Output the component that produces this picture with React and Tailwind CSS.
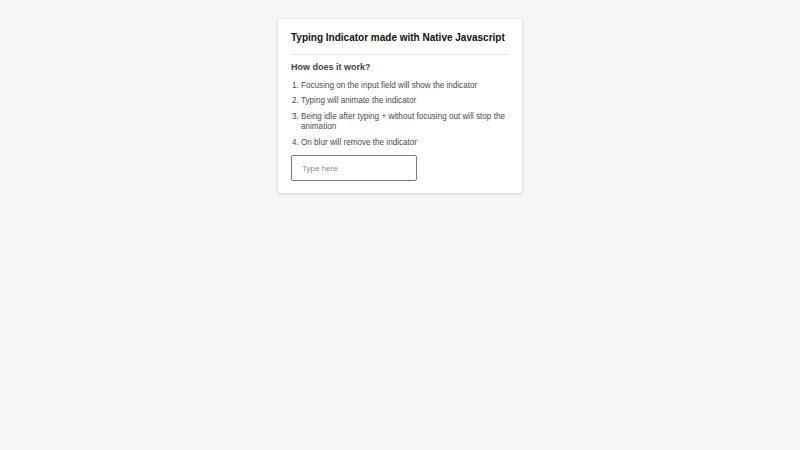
import React from 'react';

const steps = [
  'Focusing on the input field will show the indicator',
  'Typing will animate the indicator',
  'Being idle after typing + without focusing out will stop the animation',
  'On blur will remove the indicator',
];

const App = () => {
  return (
    <div className="min-h-[450px] bg-[#f7f7f7] pt-[19px] font-['Liberation_Sans',Arial,sans-serif]">
      <div className="mx-auto w-[244px] bg-white px-[13px] pt-[13px] pb-[12px] shadow-[0_1px_3px_rgba(0,0,0,0.18)]">
        <h1 className="text-[10px] leading-[12px] font-bold text-[#111]">
          Typing Indicator made with Native Javascript
        </h1>
        <hr className="mt-[10px] mb-[7px] border-0 border-t border-[#e6e6e6]" />
        <h2 className="text-[9px] leading-[10px] font-bold text-[#444]">How does it work?</h2>
        <ol className="mt-[9px] list-decimal pl-[10px] text-[8.15px] leading-[10.4px] text-[#4a4a4a]">
          {steps.map((s) => (
            <li key={s} className="mb-[5px]">{s}</li>
          ))}
        </ol>
        <input
          type="text"
          placeholder="Type here"
          className="mt-[7px] block h-[26px] w-[126px] rounded-[2px] border border-[#7a7a7a] px-[10px] text-[8px] text-[#333] placeholder:text-[#888] outline-none"
        />
      </div>
    </div>
  );
};

export default App;
